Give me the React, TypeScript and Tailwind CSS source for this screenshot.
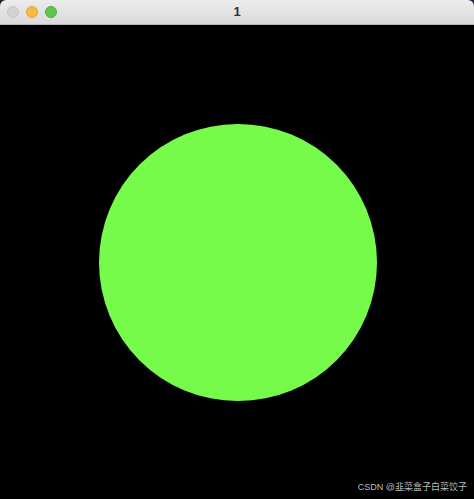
import React from 'react';

export default function App() {
  return (
    <div className="w-[474px] h-[499px] bg-[#2a1f3d] overflow-hidden" style={{ fontFamily: '"Liberation Sans", "Noto Sans CJK SC", sans-serif' }}>
      <div className="w-full h-full rounded-t-[6px] overflow-hidden flex flex-col bg-black">
        {/* Title bar */}
        <div className="h-[25px] shrink-0 flex items-center px-[7px] bg-gradient-to-b from-[#ececec] to-[#dadada] border-b border-[#b8b8b8] relative">
          <div className="flex items-center gap-[7px]">
            <span className="w-[12px] h-[12px] rounded-full bg-[#d3d3d3] border border-[#c4c4c4]" />
            <span className="w-[12px] h-[12px] rounded-full bg-[#f8bb3d] border border-[#e0a52f]" />
            <span className="w-[12px] h-[12px] rounded-full bg-[#5dc64b] border border-[#4eac3c]" />
          </div>
          <div className="absolute inset-0 flex items-center justify-center text-[13px] font-bold text-[#333]">1</div>
        </div>
        {/* Canvas */}
        <div className="flex-1 bg-black flex flex-col items-center relative">
          <div className="mt-[99px] ml-[1px] w-[278px] h-[277px] rounded-full bg-[#76fb4b]" />
          <div className="absolute right-[7px] bottom-[7px] text-[9px] text-[#bdbdbd] leading-none">CSDN @韭菜盒子白菜饺子</div>
        </div>
      </div>
    </div>
  );
}
